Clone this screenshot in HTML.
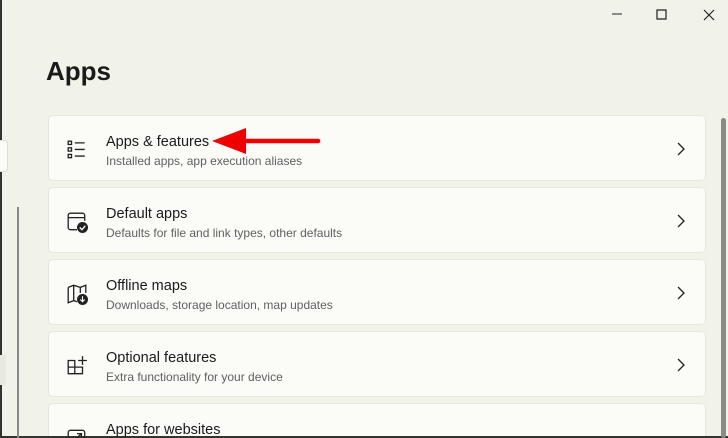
<html style="margin:0;height:438px;overflow:hidden"><head><style>
body{margin:0;width:728px;height:438px;overflow:hidden;background:#f1f3ea;font-family:"Segoe UI","Liberation Sans",sans-serif;position:relative}
.card{position:absolute;left:48px;width:658px;height:66px;background:#fbfbf7;border:1px solid #e6e8de;border-radius:5px;box-sizing:border-box}
.t{position:absolute;left:57px;top:18px;font-size:14.5px;color:#1a1a1a}
.s{position:absolute;left:57px;top:38px;font-size:12px;color:#606060}
.ch{position:absolute;right:20px;top:26px}
.ic{position:absolute;left:17px;top:23px;transform:scale(1.1);transform-origin:0 0}
</style></head><body>
<div style="position:absolute;left:0;top:0;width:2px;height:438px;background:#333"></div>
<div style="position:absolute;left:0;top:436px;width:728px;height:2px;background:#333"></div>
<div style="position:absolute;left:0;top:140px;width:7px;height:30px;background:#fbfbf7;border:1px solid #ddd;border-left:none;border-radius:0 3px 3px 0"></div>
<div style="position:absolute;left:17px;top:207px;width:2px;height:231px;background:#888"></div>
<div style="position:absolute;left:0;top:355px;width:6px;height:30px;background:#e8eae0"></div>
<div style="position:absolute;left:721px;top:118px;width:5px;height:320px;background:#8a8a84;border-radius:3px"></div>
<svg style="position:absolute;left:610px;top:8px" width="112" height="14"><path d="M2 6h10" stroke="#222"/><path d="M47 2h9v9h-9z" fill="none" stroke="#222" stroke-width="1.2"/><path d="M94 2l10 10M104 2l-10 10" stroke="#222" stroke-width="1.2"/></svg>
<div style="position:absolute;left:46px;top:56px;font-size:26px;font-weight:600;color:#1a1a1a">Apps</div>

<div class="card" style="top:115px"><svg class="ic" width="20" height="20"><g fill="none" stroke="#222" stroke-width="1.2"><rect x="2" y="2" width="3" height="3"/><rect x="2" y="8" width="3" height="3"/><rect x="2" y="14" width="3" height="3"/><path d="M8 3.5h9M8 9.5h9M8 15.5h9"/></g></svg><div class="t">Apps &amp; features</div><div class="s">Installed apps, app execution aliases</div><svg class="ch" width="8" height="14"><path d="M1 1l6 6-6 6" fill="none" stroke="#222" stroke-width="1.3"/></svg></div>
<div class="card" style="top:187px"><svg class="ic" width="22" height="22"><g fill="none" stroke="#222" stroke-width="1.2"><path d="M10 17H4a2 2 0 0 1-2-2V4a2 2 0 0 1 2-2h11a2 2 0 0 1 2 2v5M2 6h15"/></g><circle cx="15" cy="15" r="5" fill="#222"/><path d="M12.5 15l2 2 3-3.5" stroke="#fff" fill="none" stroke-width="1.2"/></svg><div class="t">Default apps</div><div class="s">Defaults for file and link types, other defaults</div><svg class="ch" width="8" height="14"><path d="M1 1l6 6-6 6" fill="none" stroke="#222" stroke-width="1.3"/></svg></div>
<div class="card" style="top:259px"><svg class="ic" width="22" height="22"><path d="M2 4l5-2 6 2 5-2v7M2 4v14l5-2 3 1M7 2v14M13 4v5" fill="none" stroke="#222" stroke-width="1.2"/><circle cx="15" cy="15" r="5" fill="#222"/><path d="M15 12v5M13 15l2 2 2-2" stroke="#fff" fill="none"/></svg><div class="t">Offline maps</div><div class="s">Downloads, storage location, map updates</div><svg class="ch" width="8" height="14"><path d="M1 1l6 6-6 6" fill="none" stroke="#222" stroke-width="1.3"/></svg></div>
<div class="card" style="top:331px"><svg class="ic" width="22" height="22"><g fill="none" stroke="#222" stroke-width="1.2"><path d="M2 5h6v12H2zM2 11h13v6H8M15 1v8M11 5h8"/></g></svg><div class="t">Optional features</div><div class="s">Extra functionality for your device</div><svg class="ch" width="8" height="14"><path d="M1 1l6 6-6 6" fill="none" stroke="#222" stroke-width="1.3"/></svg></div>
<div class="card" style="top:403px;height:33px;border-bottom:none;border-radius:5px 5px 0 0"><svg class="ic" width="22" height="22"><g fill="none" stroke="#222" stroke-width="1.2"><rect x="2" y="3" width="15" height="14" rx="2"/><path d="M8 12l6-6M10 6h4v4"/></g></svg><div class="t">Apps for websites</div></div>

<svg style="position:absolute;left:210px;top:125px" width="115" height="32"><path d="M108 16H34" stroke="#e00" stroke-width="4.5" stroke-linecap="round"/><path d="M2 16L36 3v26z" fill="#e00"/></svg>
</body></html>
